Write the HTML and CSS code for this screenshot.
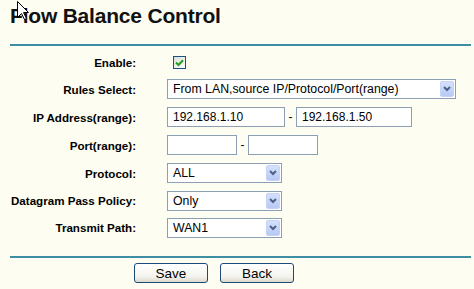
FILE: index.html
```html
<!DOCTYPE html>
<html lang="en">
<head>
    <meta charset="UTF-8">
    <title>Flow Balance Control</title>
    <link rel="stylesheet" href="styles.css">
</head>
<body>
    <div class="page">
        <h1 class="title">Flow Balance Control</h1>

        <form class="form" id="flow-form">
            <div class="row row-short">
                <label class="label">Enable:</label>
                <div class="field">
                    <span class="check">
                        <svg width="9" height="8" viewBox="0 0 9 8"><path d="M1 3.5 L3.5 6 L8 1.2" fill="none" stroke="#21a121" stroke-width="2"/></svg>
                    </span>
                </div>
            </div>

            <div class="row">
                <label class="label">Rules Select:</label>
                <div class="field">
                    <span class="select select-wide">
                        <span class="select-text">From LAN,source IP/Protocol/Port(range)</span>
                        <span class="select-btn"><svg width="8" height="6" viewBox="0 0 8 6"><path d="M1 1 L4 4 L7 1" fill="none" stroke="#4d6185" stroke-width="2"/></svg></span>
                    </span>
                </div>
            </div>

            <div class="row">
                <label class="label">IP Address(range):</label>
                <div class="field">
                    <input type="text" class="text text-ip" value="192.168.1.10">
                    <span class="dash">-</span>
                    <input type="text" class="text text-ip2" value="192.168.1.50">
                </div>
            </div>

            <div class="row">
                <label class="label">Port(range):</label>
                <div class="field">
                    <input type="text" class="text text-port" value="">
                    <span class="dash">-</span>
                    <input type="text" class="text text-port" value="">
                </div>
            </div>

            <div class="row">
                <label class="label">Protocol:</label>
                <div class="field">
                    <span class="select">
                        <span class="select-text">ALL</span>
                        <span class="select-btn"><svg width="8" height="6" viewBox="0 0 8 6"><path d="M1 1 L4 4 L7 1" fill="none" stroke="#4d6185" stroke-width="2"/></svg></span>
                    </span>
                </div>
            </div>

            <div class="row row-tight">
                <label class="label">Datagram Pass Policy:</label>
                <div class="field">
                    <span class="select">
                        <span class="select-text">Only</span>
                        <span class="select-btn"><svg width="8" height="6" viewBox="0 0 8 6"><path d="M1 1 L4 4 L7 1" fill="none" stroke="#4d6185" stroke-width="2"/></svg></span>
                    </span>
                </div>
            </div>

            <div class="row row-tight">
                <label class="label">Transmit Path:</label>
                <div class="field">
                    <span class="select">
                        <span class="select-text">WAN1</span>
                        <span class="select-btn"><svg width="8" height="6" viewBox="0 0 8 6"><path d="M1 1 L4 4 L7 1" fill="none" stroke="#4d6185" stroke-width="2"/></svg></span>
                    </span>
                </div>
            </div>
        </form>

        <div class="actions">
            <button type="button" class="btn">Save</button>
            <button type="button" class="btn">Back</button>
        </div>
    </div>

    <!-- mouse pointer from the screenshot -->
    <svg class="cursor" width="13" height="20" viewBox="0 0 13 20">
        <path d="M0.5 0.5 L0.5 16.5 L4.5 12.5 L7.5 18.5 L9.5 17.5 L6.5 11.5 L11.5 11.5 Z" fill="#fff" stroke="#000" stroke-width="1"/>
    </svg>
</body>
</html>
```

FILE: styles.css
```css
:root {
    --line-color: #3f8fa4;
    --field-border: #8c9fb4;
    --page-bg: #fdfdf1;
}

* {
    box-sizing: border-box;
}

body {
    margin: 0;
    background: var(--page-bg);
    font-family: 'Liberation Sans', Arial, sans-serif;
    color: #000;
}

.page {
    padding: 0 3px 0 10px;
}

.title {
    margin: 0;
    height: 46px;
    padding-top: 4px;
    font-size: 21px;
    line-height: 24px;
    font-weight: bold;
    letter-spacing: -0.2px;
    color: #111;
    border-bottom: 2px solid var(--line-color);
}

.form {
    padding-top: 4px;
}

.row {
    display: grid;
    grid-template-columns: 126px 1fr;
    column-gap: 31px;
    align-items: center;
    height: 28px;
}

.row-short {
    height: 25px;
}

.row-tight {
    height: 27px;
}

.label {
    text-align: right;
    font-size: 11.6px;
    font-weight: bold;
    color: #000;
}

.field {
    display: flex;
    align-items: center;
}

.check {
    display: flex;
    align-items: center;
    justify-content: center;
    width: 13px;
    height: 13px;
    margin-left: 6px;
    border: 1px solid #1c5180;
    background: linear-gradient(135deg, #dcdcd7 0%, #ffffff 100%);
}

.select {
    display: flex;
    align-items: center;
    width: 115px;
    height: 20px;
    border: 1px solid var(--field-border);
    background: #fff;
}

.select-wide {
    width: 289px;
}

.select-text {
    flex: 1;
    padding-left: 5px;
    font-size: 12.3px;
    white-space: nowrap;
}

.select-btn {
    display: flex;
    align-items: center;
    justify-content: center;
    width: 14px;
    height: 16px;
    margin-right: 1px;
    border: 1px solid #c4d3f5;
    border-radius: 2px;
    background: linear-gradient(#d5e0fc, #b7c9f6);
}

.text {
    height: 20px;
    padding: 0 5px;
    border: 1px solid var(--field-border);
    background: #fff;
    font-family: 'Liberation Sans', Arial, sans-serif;
    font-size: 12px;
    color: #000;
    outline: none;
}

.text-ip {
    width: 118px;
}

.text-ip2 {
    width: 116px;
}

.text-port {
    width: 70px;
}

.dash {
    width: 11px;
    text-align: center;
    font-size: 12px;
}

.actions {
    display: flex;
    gap: 12px;
    margin-top: 15px;
    padding: 5px 0 0 124px;
    border-top: 2px solid var(--line-color);
}

.btn {
    width: 74px;
    height: 20px;
    padding: 0;
    border: 1px solid #1f4a78;
    border-radius: 3px;
    background: linear-gradient(#ffffff 0%, #f4f4ee 70%, #dcd8cc 100%);
    font-family: 'Liberation Sans', Arial, sans-serif;
    font-size: 13.5px;
    color: #000;
    cursor: pointer;
}

.cursor {
    position: absolute;
    left: 17px;
    top: 1px;
}
```
